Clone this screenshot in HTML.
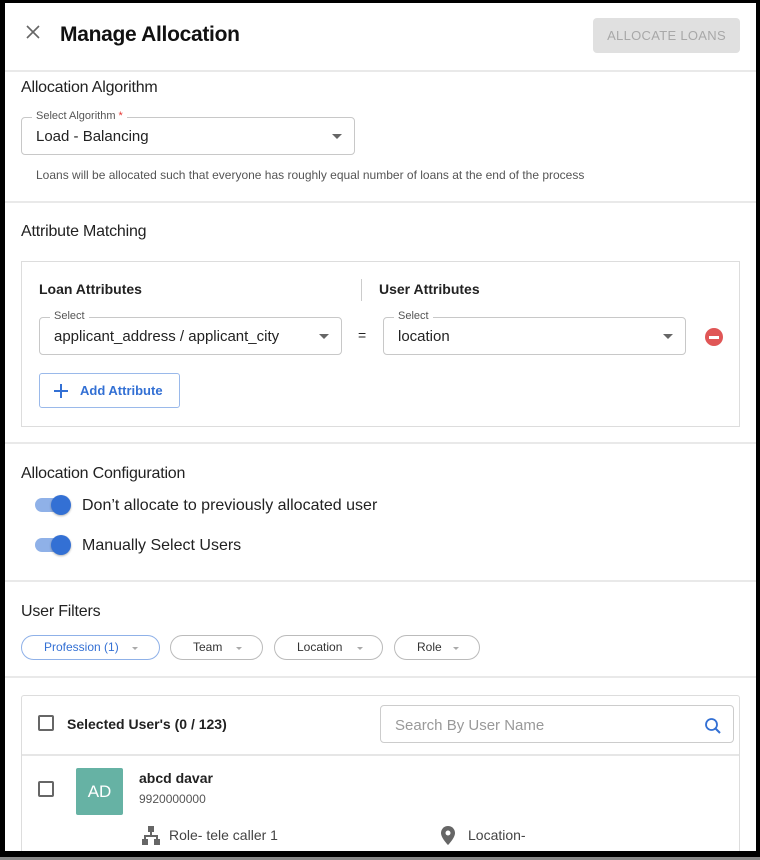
<!DOCTYPE html>
<html><head><style>
*{box-sizing:border-box;margin:0;padding:0}
body{width:760px;height:860px;background:#000;font-family:"Liberation Sans",sans-serif;color:#212121;position:relative;overflow:hidden}
#pg{position:absolute;left:5px;top:3px;width:751px;height:848px;background:#fff;overflow:hidden}
.a{position:absolute;white-space:nowrap}
.hr{position:absolute;left:0;width:751px;height:2px;background:#e9e9e9}
.h2{font-size:16px;color:#222;letter-spacing:-.2px}
.box{position:absolute;border:1px solid #c8c8c8;border-radius:4px}
.lab{position:absolute;top:-8px;left:10px;background:#fff;padding:0 4px;font-size:11px;color:#555}
.tri{position:absolute;width:0;height:0;border-left:5px solid transparent;border-right:5px solid transparent;border-top:5px solid #666}
.chip{position:absolute;top:632px;height:25px;border:1px solid #bbb;border-radius:13px;font-size:12px;color:#333;line-height:23px;padding-left:0}
.chip .t{position:absolute;top:0}
.chip .tri{border-left:3px solid transparent;border-right:3px solid transparent;border-top:3px solid #aaa;top:11px}
.tg{position:absolute;width:40px;height:22px}
.tg .tr{position:absolute;left:2px;top:4px;width:34px;height:14px;border-radius:7px;background:#8fb1e8}
.tg .k{position:absolute;left:18px;top:1px;width:20px;height:20px;border-radius:50%;background:#3370d4;box-shadow:0 1px 2px rgba(0,0,0,.3)}
.cb{position:absolute;width:16px;height:16px;border:2px solid #666;border-radius:2px}
</style></head><body>
<div id="pg">
<svg class="a" style="left:21px;top:22px" width="14" height="14" viewBox="0 0 14 14"><path d="M1 1L13 13M13 1L1 13" stroke="#666" stroke-width="1.6"/></svg>
<div class="a" style="left:55px;top:20px;font-size:21px;font-weight:bold;color:#111;letter-spacing:-.3px">Manage Allocation</div>
<div class="a" style="left:588px;top:15px;width:147px;height:35px;background:#e0e0e0;border-radius:4px;color:#a8a8a8;font-size:13px;text-align:center;line-height:35px;letter-spacing:.3px">ALLOCATE LOANS</div>
<div class="hr" style="top:67px"></div>

<div class="a h2" style="left:16px;top:76px">Allocation Algorithm</div>
<div class="box" style="left:16px;top:114px;width:334px;height:38px">
<div class="lab">Select Algorithm <span style="color:#e53935">*</span></div>
<div class="a" style="left:14px;top:10px;font-size:15px;color:#222">Load - Balancing</div>
<div class="tri" style="left:310px;top:16px"></div></div>
<div class="a" style="left:31px;top:165px;font-size:12px;color:#555">Loans will be allocated such that everyone has roughly equal number of loans at the end of the process</div>
<div class="hr" style="top:198px"></div>

<div class="a h2" style="left:16px;top:220px">Attribute Matching</div>
<div class="a" style="left:16px;top:258px;width:719px;height:166px;border:1px solid #ddd"></div>
<div class="a" style="left:34px;top:278px;font-size:14px;font-weight:bold;color:#222">Loan Attributes</div>
<div class="a" style="left:356px;top:276px;width:1px;height:22px;background:#ccc"></div>
<div class="a" style="left:374px;top:278px;font-size:14px;font-weight:bold;color:#222">User Attributes</div>
<div class="box" style="left:34px;top:314px;width:303px;height:38px">
<div class="lab">Select</div>
<div class="a" style="left:14px;top:10px;font-size:15px;color:#222">applicant_address / applicant_city</div>
<div class="tri" style="left:279px;top:16px"></div></div>
<div class="a" style="left:353px;top:324px;font-size:14px">=</div>
<div class="box" style="left:378px;top:314px;width:303px;height:38px">
<div class="lab">Select</div>
<div class="a" style="left:14px;top:10px;font-size:15px;color:#222">location</div>
<div class="tri" style="left:279px;top:16px"></div></div>
<div class="a" style="left:700px;top:325px;width:18px;height:18px;border-radius:50%;background:#e05656"><div style="position:absolute;left:4px;top:8px;width:10px;height:2.5px;background:#fff"></div></div>
<div class="a" style="left:34px;top:370px;width:141px;height:35px;border:1px solid #9ab9ea;border-radius:3px"></div>
<svg class="a" style="left:49px;top:381px" width="14" height="14" viewBox="0 0 14 14"><path d="M7 0V14M0 7H14" stroke="#3370d4" stroke-width="2"/></svg>
<div class="a" style="left:75px;top:380px;font-size:13px;font-weight:bold;color:#3370d4">Add Attribute</div>
<div class="hr" style="top:439px"></div>

<div class="a h2" style="left:16px;top:462px">Allocation Configuration</div>
<div class="tg" style="left:28px;top:491px"><div class="tr"></div><div class="k"></div></div>
<div class="a" style="left:77px;top:494px;font-size:16px;color:#222">Don’t allocate to previously allocated user</div>
<div class="tg" style="left:28px;top:531px"><div class="tr"></div><div class="k"></div></div>
<div class="a" style="left:77px;top:534px;font-size:16px;color:#222">Manually Select Users</div>
<div class="hr" style="top:577px"></div>

<div class="a h2" style="left:16px;top:600px">User Filters</div>
<div class="chip" style="left:16px;width:139px;border-color:#8fb1e8;color:#3370d4"><span class="t" style="left:22px">Profession (1)</span><div class="tri" style="left:110px"></div></div>
<div class="chip" style="left:165px;width:93px"><span class="t" style="left:22px">Team</span><div class="tri" style="left:65px"></div></div>
<div class="chip" style="left:269px;width:109px"><span class="t" style="left:22px">Location</span><div class="tri" style="left:82px"></div></div>
<div class="chip" style="left:389px;width:86px"><span class="t" style="left:22px">Role</span><div class="tri" style="left:58px"></div></div>
<div class="hr" style="top:673px"></div>

<div class="a" style="left:16px;top:692px;width:719px;height:170px;border:1px solid #ddd;border-radius:3px"></div>
<div class="a" style="left:17px;top:751px;width:717px;height:2px;background:#e6e6e6"></div>
<div class="cb" style="left:33px;top:712px"></div>
<div class="a" style="left:62px;top:713px;font-size:14px;font-weight:bold;color:#222">Selected User's (0 / 123)</div>
<div class="box" style="left:375px;top:702px;width:354px;height:38px;border-color:#ccc">
<div class="a" style="left:14px;top:11px;font-size:15px;color:#999">Search By User Name</div>
<svg class="a" style="left:323px;top:11px" width="18" height="18" viewBox="0 0 18 18"><circle cx="7.5" cy="7.5" r="5.5" fill="none" stroke="#3370d4" stroke-width="1.8"/><line x1="11.5" y1="11.5" x2="16" y2="16" stroke="#3370d4" stroke-width="2"/></svg></div>
<div class="cb" style="left:33px;top:778px"></div>
<div class="a" style="left:71px;top:765px;width:47px;height:47px;background:#66b2a4;border-radius:2px;color:#fff;font-size:17px;text-align:center;line-height:47px">AD</div>
<div class="a" style="left:134px;top:767px;font-size:14px;font-weight:bold;color:#222">abcd davar</div>
<div class="a" style="left:134px;top:789px;font-size:12px;color:#555">9920000000</div>
<svg class="a" style="left:137px;top:823px" width="18" height="20" viewBox="0 0 18 20"><g fill="#666"><rect x="6" y="0" width="6" height="6"/><rect x="8" y="6" width="2" height="4"/><rect x="2" y="9" width="14" height="2"/><rect x="2" y="9" width="2" height="4"/><rect x="14" y="9" width="2" height="4"/><rect x="0" y="13" width="6" height="6"/><rect x="12" y="13" width="6" height="6"/></g></svg>
<div class="a" style="left:164px;top:824px;font-size:14px;color:#444">Role- tele caller 1</div>
<svg class="a" style="left:436px;top:823px" width="14" height="19" viewBox="0 0 14 19"><path d="M7 0C3.1 0 0 3.1 0 7c0 5 7 12 7 12s7-7 7-12c0-3.9-3.1-7-7-7z" fill="#666"/><circle cx="7" cy="7" r="2.5" fill="#fff"/></svg>
<div class="a" style="left:463px;top:824px;font-size:14px;color:#444">Location-</div>
</div>
<div class="a" style="left:0;top:857px;width:760px;height:3px;background:#888"></div>
</body></html>
